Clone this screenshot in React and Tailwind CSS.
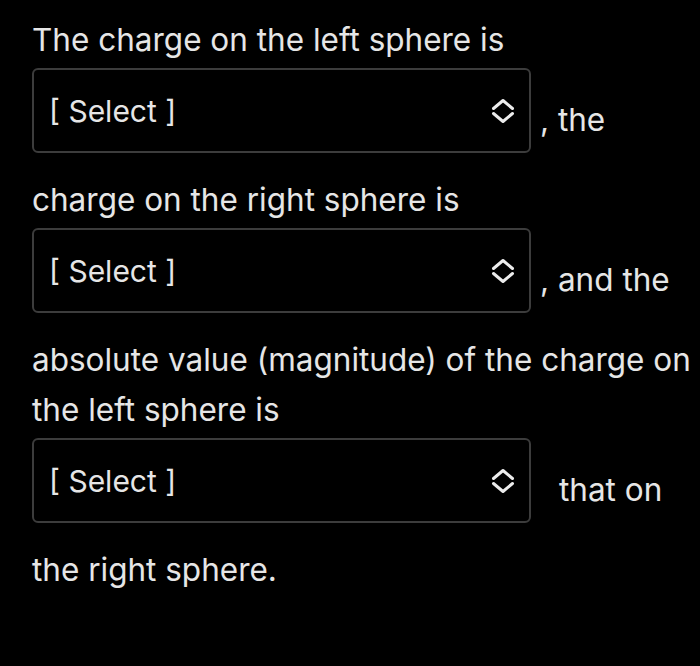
import React from 'react';

const Chevrons = () => (
  <svg width="24" height="28" viewBox="0 0 24 28" fill="none" stroke="#ececec" strokeWidth="3" strokeLinecap="round" strokeLinejoin="round">
    <path d="M2.5 11.5 12 3.5l9.5 8" />
    <path d="M2.5 16.5l9.5 8 9.5-8" />
  </svg>
);

const SelectBox = () => (
  <div className="flex h-[85px] w-[499px] shrink-0 items-center justify-between rounded-[6px] border-2 border-[#3c3c3c] pl-[15px] pr-[14px]">
    <span className="text-[30px] leading-none text-[#e6e6e6]">[ Select ]</span>
    <Chevrons />
  </div>
);

const Line = ({ children, className = '' }) => (
  <p className={`text-[31.5px] leading-[50px] text-[#e6e6e6] ${className}`}>{children}</p>
);

const SelectRow = ({ after, gap }) => (
  <div className="flex items-start">
    <SelectBox />
    <span className={`mt-[27px] text-[31.5px] leading-[50px] text-[#e6e6e6] ${gap}`}>{after}</span>
  </div>
);

export default function App() {
  return (
    <div className="min-h-[666px] w-[700px] bg-black pl-[32px] pt-[15px]" style={{ fontFamily: 'Inter, Lato, sans-serif' }}>
      <Line>The charge on the left sphere is</Line>
      <div className="mt-[3px]">
        <SelectRow after=", the" gap="ml-[9px]" />
      </div>
      <Line className="mt-[22px]">charge on the right sphere is</Line>
      <div className="mt-[3px]">
        <SelectRow after=", and the" gap="ml-[9px]" />
      </div>
      <Line className="mt-[22px]">absolute value (magnitude) of the charge on</Line>
      <Line>the left sphere is</Line>
      <div className="mt-[3px]">
        <SelectRow after="that on" gap="ml-[28px]" />
      </div>
      <Line className="mt-[22px]">the right sphere.</Line>
    </div>
  );
}
